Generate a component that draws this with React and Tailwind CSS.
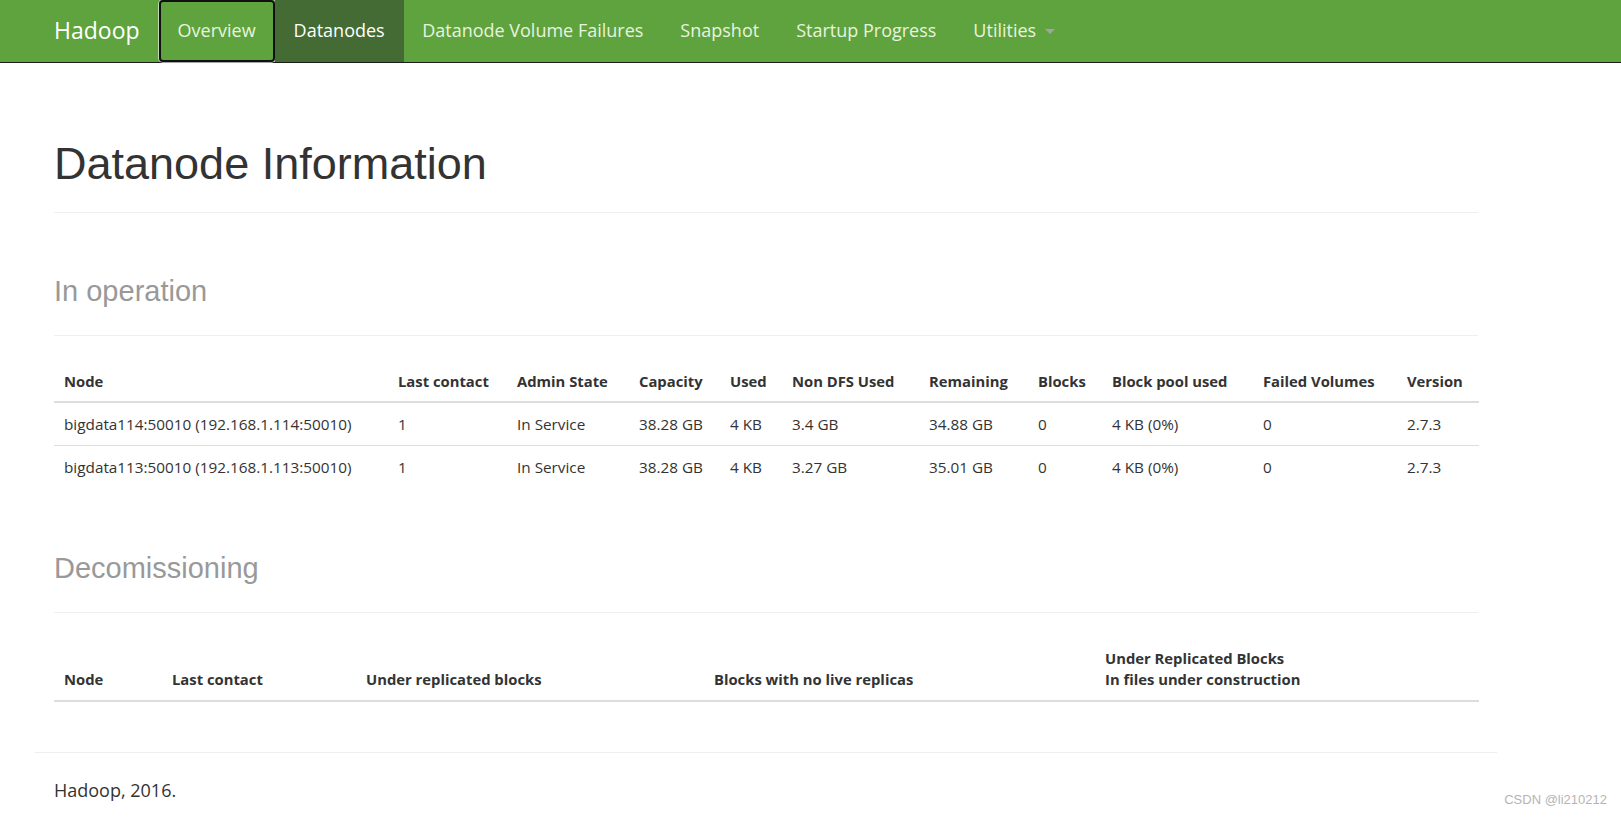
import React from 'react';

const navLinks = ['Datanode Volume Failures', 'Snapshot', 'Startup Progress'];

const liveNodes = [
  ['bigdata114:50010 (192.168.1.114:50010)', '1', 'In Service', '38.28 GB', '4 KB', '3.4 GB', '34.88 GB', '0', '4 KB (0%)', '0', '2.7.3'],
  ['bigdata113:50010 (192.168.1.113:50010)', '1', 'In Service', '38.28 GB', '4 KB', '3.27 GB', '35.01 GB', '0', '4 KB (0%)', '0', '2.7.3'],
];

const liveCols = [
  { label: 'Node', w: 'w-[334px]' },
  { label: 'Last contact', w: 'w-[119px]' },
  { label: 'Admin State', w: 'w-[122px]' },
  { label: 'Capacity', w: 'w-[91px]' },
  { label: 'Used', w: 'w-[62px]' },
  { label: 'Non DFS Used', w: 'w-[137px]' },
  { label: 'Remaining', w: 'w-[109px]' },
  { label: 'Blocks', w: 'w-[74px]' },
  { label: 'Block pool used', w: 'w-[151px]' },
  { label: 'Failed Volumes', w: 'w-[144px]' },
  { label: 'Version', w: 'w-[82px]' },
];

const decomCols = [
  { label: 'Node', w: 'w-[108px]' },
  { label: 'Last contact', w: 'w-[194px]' },
  { label: 'Under replicated blocks', w: 'w-[348px]' },
  { label: 'Blocks with no live replicas', w: 'w-[391px]' },
  { label: ['Under Replicated Blocks', 'In files under construction'], w: 'w-[384px]' },
];

const body = { fontFamily: '"Open Sans", "Noto Sans", sans-serif' };
const head = { fontFamily: '"Liberation Sans", Arial, sans-serif' };

const SectionHeader = ({ children, className }) => (
  <div className={`${className} pb-[28px] border-b border-[#eee]`}>
    <h2 style={head} className="text-[29px] leading-[32px] text-[#999] font-normal">{children}</h2>
  </div>
);

const Navbar = () => (
  <nav style={body} className="h-[63px] bg-[#5fa33e] border-b border-[#1c1c1c] flex items-stretch pl-[35px]">
    <a className="px-[19px] pb-[2px] flex items-center text-[23px] text-white">Hadoop</a>
    <a className="px-[17px] pb-[2px] flex items-center text-[18px] text-[#e8f3df] border-2 border-[#111] rounded-[4px] ring-1 ring-white/60 h-[62px]">Overview</a>
    <a className="px-[19px] pb-[2px] flex items-center text-[18px] text-white bg-[#456b34]">Datanodes</a>
    {navLinks.map((l) => (
      <a key={l} className="px-[18.5px] pb-[2px] flex items-center text-[18px] text-[#e8f3df]">{l}</a>
    ))}
    <a className="px-[18.5px] pb-[2px] flex items-center text-[18px] text-[#e8f3df]">
      Utilities
      <span className="ml-[9px] mt-[2px] w-0 h-0 border-x-[5px] border-x-transparent border-t-[5px] border-t-[#a3a3a3]" />
    </a>
  </nav>
);

export default function App() {
  return (
    <div className="relative min-h-screen bg-white text-[#333]">
      <Navbar />

      <div className="ml-[35px] w-[1462px]">
        <div className="px-[19px]">
          <div className="pt-[76px] pb-[23px] border-b border-[#eee]">
            <h1 style={head} className="text-[45px] leading-[50px] text-[#333] font-normal">Datanode Information</h1>
          </div>

          <SectionHeader className="mt-[62px]">In operation</SectionHeader>

          <table style={body} className="mt-[24px] w-[1425px] table-fixed border-collapse text-[15.3px]">
            <thead>
              <tr className="border-b-2 border-[#ddd]">
                {liveCols.map((c) => (
                  <th key={c.label} className={`${c.w} px-[10px] pt-[10px] pb-[9px] leading-[22px] text-left text-[14.8px] font-bold align-bottom whitespace-nowrap`}>
                    {c.label}
                  </th>
                ))}
              </tr>
            </thead>
            <tbody>
              {liveNodes.map((row, i) => (
                <tr key={row[0]} className={i > 0 ? 'border-t border-[#ddd]' : ''}>
                  {row.map((cell, j) => (
                    <td key={j} className="px-[10px] py-[10px] leading-[22px] whitespace-nowrap">{cell}</td>
                  ))}
                </tr>
              ))}
            </tbody>
          </table>

          <SectionHeader className="mt-[64px]">Decomissioning</SectionHeader>

          <table style={body} className="mt-[25px] w-[1425px] table-fixed border-collapse text-[14.8px]">
            <thead>
              <tr className="border-b-2 border-[#ddd]">
                {decomCols.map((c, i) => (
                  <th key={i} className={`${c.w} px-[10px] py-[10px] leading-[21px] text-left font-bold align-bottom whitespace-nowrap`}>
                    {Array.isArray(c.label) ? (
                      <>
                        {c.label[0]}
                        <br />
                        {c.label[1]}
                      </>
                    ) : (
                      c.label
                    )}
                  </th>
                ))}
              </tr>
            </thead>
          </table>
        </div>

        <div className="mt-[50px] border-t border-[#eee] px-[19px] pt-[25px]">
          <p style={body} className="text-[18px] leading-[25px]">Hadoop, 2016.</p>
        </div>
      </div>

      <div style={head} className="absolute right-[14px] bottom-[9px] text-[13px] text-[#b5b5b5]">
        CSDN @li210212
      </div>
    </div>
  );
}
